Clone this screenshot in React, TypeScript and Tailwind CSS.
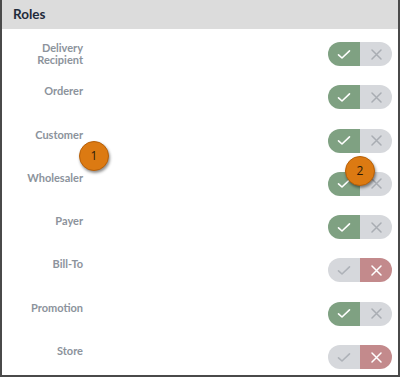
import React from "react";

type Row = { label: string[]; on: boolean };

const rows: Row[] = [
  { label: ["Delivery", "Recipient"], on: true },
  { label: ["Orderer"], on: true },
  { label: ["Customer"], on: true },
  { label: ["Wholesaler"], on: true },
  { label: ["Payer"], on: true },
  { label: ["Bill-To"], on: false },
  { label: ["Promotion"], on: true },
  { label: ["Store"], on: false },
];

function Check({ color }: { color: string }) {
  return (
    <svg width="14" height="11" viewBox="0 0 14 11" fill="none">
      <path d="M1.5 5.8 L5 9 L12.5 1.8" stroke={color} strokeWidth="1.6" strokeLinecap="round" strokeLinejoin="round" />
    </svg>
  );
}

function Cross({ color }: { color: string }) {
  return (
    <svg width="11" height="11" viewBox="0 0 11 11" fill="none">
      <path d="M1 1 L10 10 M10 1 L1 10" stroke={color} strokeWidth="1.5" strokeLinecap="round" />
    </svg>
  );
}

function Toggle({ on }: { on: boolean }) {
  return (
    <div className="flex h-[24px] w-[64px] overflow-hidden rounded-full">
      <div className={`flex w-[32px] items-center justify-center ${on ? "bg-[#7fa182]" : "bg-[#d6d8dc]"}`}>
        <Check color={on ? "#ffffff" : "#aeb2b8"} />
      </div>
      <div className={`flex w-[32px] items-center justify-center ${on ? "bg-[#d6d8dc]" : "bg-[#c38a8c]"}`}>
        <Cross color={on ? "#a9adb3" : "#ffffff"} />
      </div>
    </div>
  );
}

function Badge({ n }: { n: number }) {
  return (
    <div className="flex h-[30px] w-[30px] items-center justify-center rounded-full border border-[#b86008] bg-[#dc7a12] text-[12px] text-[#2a1a08] shadow-[1px_2px_3px_rgba(0,0,0,0.45)]" style={{ fontFamily: "'Open Sans', sans-serif" }}>
      {n}
    </div>
  );
}

export default function App() {
  return (
    <div className="relative h-[377px] w-[400px] overflow-hidden border-x-2 border-b-2 border-[#4a4a4a] bg-white" style={{ fontFamily: "Lato, 'Open Sans', sans-serif" }}>
      <div className="flex h-[29px] items-center bg-[#dcdcdc] pl-[11px] text-[13.5px] font-bold text-[#1f2b3b]">
        Roles
      </div>
      <div className="flex flex-col gap-[19.3px] pt-[13px]">
        {rows.map((r, i) => (
          <div key={i} className="flex h-[24px] items-start">
            <div className="w-[81px] pt-[0px] text-right text-[11px] font-bold leading-[12px] text-[#8c939c]">
              {r.label.map((l, j) => (
                <div key={j}>{l}</div>
              ))}
            </div>
            <div className="ml-auto mr-[6px]">
              <Toggle on={r.on} />
            </div>
          </div>
        ))}
      </div>
      <div className="absolute left-[77px] top-[141px]">
        <Badge n={1} />
      </div>
      <div className="absolute left-[343px] top-[156px]">
        <Badge n={2} />
      </div>
    </div>
  );
}
